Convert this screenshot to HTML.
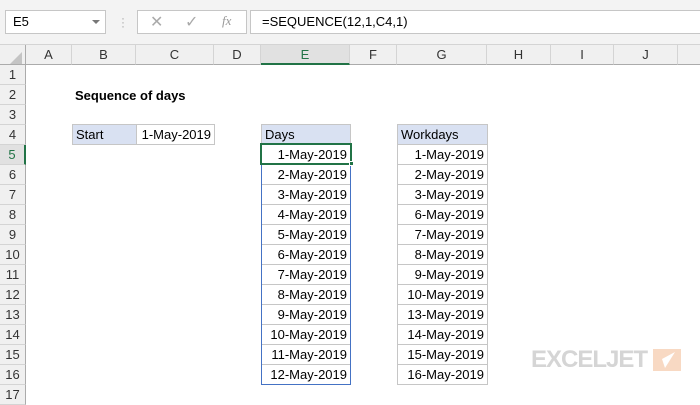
<!DOCTYPE html>
<html><head><style>
*{margin:0;padding:0;box-sizing:border-box}
body{width:700px;height:400px;overflow:hidden;background:#fff;font-family:"Liberation Sans",sans-serif;font-size:13px;color:#000;position:relative}
.a{position:absolute}
.ch{position:absolute;top:45px;height:20px;background:#f0f0f0;border-right:1px solid #d4d4d4;border-bottom:1px solid #ababab;text-align:center;line-height:19px;color:#333;font-size:13px}
.rh{position:absolute;left:0;width:26px;height:20px;background:#f0f0f0;border-bottom:1px solid #d4d4d4;border-right:1px solid #ababab;text-align:center;line-height:20px;color:#333;font-size:13px}
.c{position:absolute;height:21px;border:1px solid #c6c6c6;line-height:19px;padding:0 3px;white-space:nowrap}
.r{text-align:right}
.hd{background:#d9e1f2}
</style></head><body>
<div class="a" style="left:0;top:0;width:700px;height:45px;background:#f3f3f3;border-bottom:1px solid #d4d4d4"></div>
<div class="a" style="left:5px;top:10px;width:101px;height:24px;background:#fff;border:1px solid #c6c6c6;line-height:22px;padding-left:7px">E5</div>
<div class="a" style="left:92px;top:20px;width:0;height:0;border-left:4px solid transparent;border-right:4px solid transparent;border-top:4px solid #777"></div>
<div class="a" style="left:121px;top:16px;color:#aaa;font-size:12px;line-height:4px">·<br>·<br>·</div>
<div class="a" style="left:137px;top:10px;width:110px;height:24px;background:#fff;border:1px solid #c6c6c6"></div>
<div class="a" style="left:150px;top:12px;color:#aaa;font-size:16px">✕</div>
<div class="a" style="left:185px;top:12px;color:#aaa;font-size:16px">✓</div>
<div class="a" style="left:222px;top:13px;color:#999;font-size:13px;font-style:italic;font-family:'Liberation Serif',serif">fx</div>
<div class="a" style="left:250px;top:10px;width:452px;height:24px;background:#fff;border:1px solid #c6c6c6;line-height:22px;padding-left:11px">=SEQUENCE(12,1,C4,1)</div>

<div class="ch" style="left:0;width:26px;border-right:1px solid #ababab"></div>
<div class="a" style="left:10px;top:52px;width:0;height:0;border-left:12px solid transparent;border-bottom:12px solid #c4c4c4"></div>
<div class="ch" style="left:26px;width:46px">A</div>
<div class="ch" style="left:72px;width:64px">B</div>
<div class="ch" style="left:136px;width:78px">C</div>
<div class="ch" style="left:214px;width:47px">D</div>
<div class="ch" style="left:261px;width:89px;background:#e1e1e1;border-bottom:2px solid #217346;color:#217346">E</div>
<div class="ch" style="left:350px;width:47px">F</div>
<div class="ch" style="left:397px;width:90px">G</div>
<div class="ch" style="left:487px;width:64px">H</div>
<div class="ch" style="left:551px;width:63px">I</div>
<div class="ch" style="left:614px;width:64px">J</div>
<div class="ch" style="left:678px;width:30px"></div>

<div class="rh" style="top:65px">1</div><div class="rh" style="top:85px">2</div><div class="rh" style="top:105px">3</div><div class="rh" style="top:125px">4</div>
<div class="rh" style="top:145px;background:#e1e1e1;border-right:2px solid #217346;color:#217346">5</div>
<div class="rh" style="top:165px">6</div><div class="rh" style="top:185px">7</div><div class="rh" style="top:205px">8</div><div class="rh" style="top:225px">9</div><div class="rh" style="top:245px">10</div><div class="rh" style="top:265px">11</div><div class="rh" style="top:285px">12</div><div class="rh" style="top:305px">13</div><div class="rh" style="top:325px">14</div><div class="rh" style="top:345px">15</div><div class="rh" style="top:365px">16</div><div class="rh" style="top:385px">17</div>

<div class="a" style="left:75px;top:88px;font-weight:bold;line-height:16px">Sequence of days</div>
<div class="c hd" style="left:72px;top:124px;width:65px">Start</div>
<div class="c r" style="left:136px;top:124px;width:79px">1-May-2019</div>

<div class="c hd" style="left:261px;top:124px;width:90px">Days</div>
<div class="c r" style="left:261px;top:144px;width:90px">1-May-2019</div>
<div class="c r" style="left:261px;top:164px;width:90px">2-May-2019</div>
<div class="c r" style="left:261px;top:184px;width:90px">3-May-2019</div>
<div class="c r" style="left:261px;top:204px;width:90px">4-May-2019</div>
<div class="c r" style="left:261px;top:224px;width:90px">5-May-2019</div>
<div class="c r" style="left:261px;top:244px;width:90px">6-May-2019</div>
<div class="c r" style="left:261px;top:264px;width:90px">7-May-2019</div>
<div class="c r" style="left:261px;top:284px;width:90px">8-May-2019</div>
<div class="c r" style="left:261px;top:304px;width:90px">9-May-2019</div>
<div class="c r" style="left:261px;top:324px;width:90px">10-May-2019</div>
<div class="c r" style="left:261px;top:344px;width:90px">11-May-2019</div>
<div class="c r" style="left:261px;top:364px;width:90px">12-May-2019</div>
<div class="a" style="left:261px;top:144px;width:90px;height:241px;border:1px solid #4472c4"></div>
<div class="a" style="left:260px;top:143px;width:92px;height:22px;border:2px solid #217346"></div>
<div class="a" style="left:349px;top:161px;width:5px;height:5px;background:#217346;border:1px solid #fff"></div>

<div class="c hd" style="left:397px;top:124px;width:91px">Workdays</div>
<div class="c r" style="left:397px;top:144px;width:91px">1-May-2019</div>
<div class="c r" style="left:397px;top:164px;width:91px">2-May-2019</div>
<div class="c r" style="left:397px;top:184px;width:91px">3-May-2019</div>
<div class="c r" style="left:397px;top:204px;width:91px">6-May-2019</div>
<div class="c r" style="left:397px;top:224px;width:91px">7-May-2019</div>
<div class="c r" style="left:397px;top:244px;width:91px">8-May-2019</div>
<div class="c r" style="left:397px;top:264px;width:91px">9-May-2019</div>
<div class="c r" style="left:397px;top:284px;width:91px">10-May-2019</div>
<div class="c r" style="left:397px;top:304px;width:91px">13-May-2019</div>
<div class="c r" style="left:397px;top:324px;width:91px">14-May-2019</div>
<div class="c r" style="left:397px;top:344px;width:91px">15-May-2019</div>
<div class="c r" style="left:397px;top:364px;width:91px">16-May-2019</div>

<div class="a" style="left:531px;top:347px;font-weight:bold;font-size:24px;color:#d5d5d5;letter-spacing:-1px;line-height:26px">EXCELJET</div>
<div class="a" style="left:653px;top:349px;width:28px;height:22px;background:#f8d9c3"></div>
<svg class="a" style="left:653px;top:349px" width="28" height="22"><path d="M12 19 L22 3 L9 10 Z" fill="#fff"/></svg>
</body></html>
